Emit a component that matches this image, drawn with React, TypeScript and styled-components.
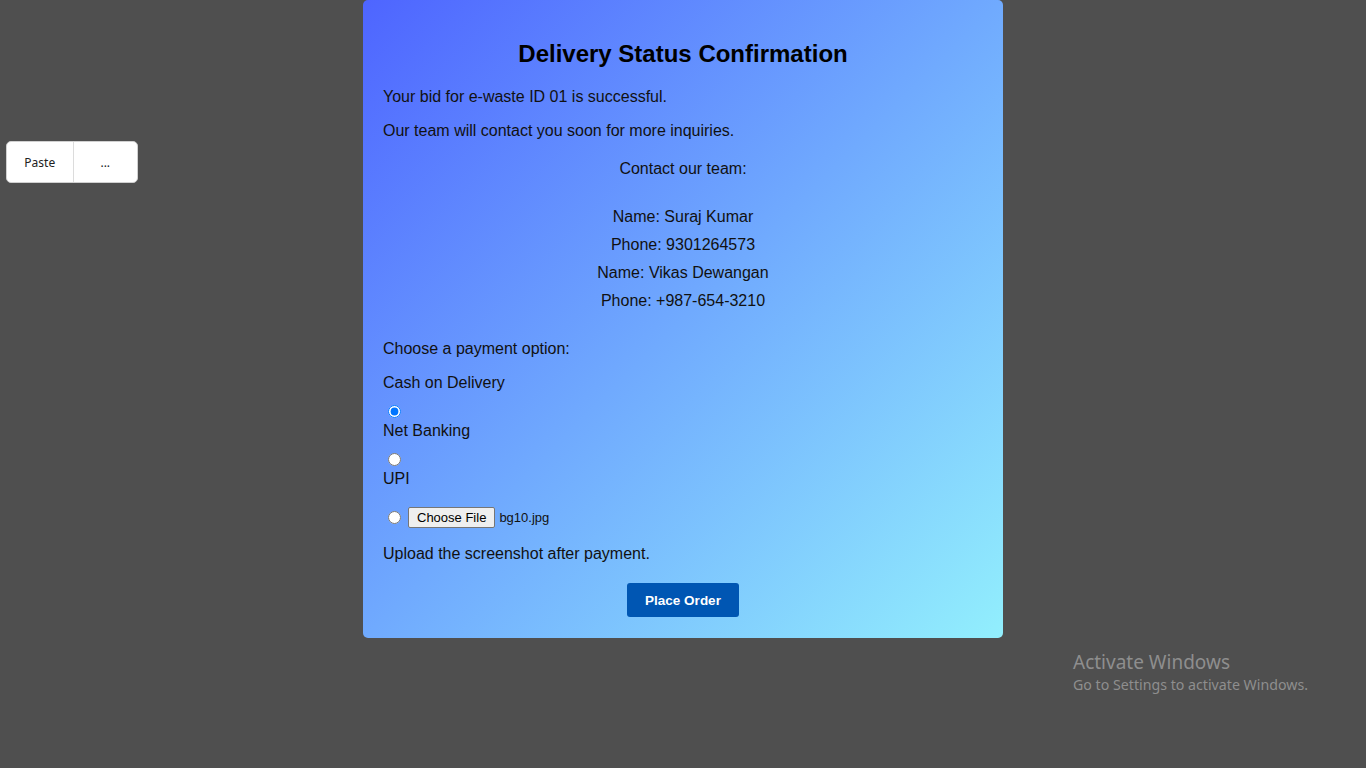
import React from 'react';
import styled, { createGlobalStyle } from 'styled-components';

const GlobalStyle = createGlobalStyle`
  html, body {
    margin: 0;
    padding: 0;
    background: #4f4f4f;
    height: 100%;
  }
  body {
    font-family: "Liberation Sans", Arial, sans-serif;
    overflow: hidden;
  }
`;

const Page = styled.div`
  width: 1366px;
  height: 768px;
  position: relative;
`;

const Card = styled.div`
  width: 640px;
  box-sizing: border-box;
  margin: 0 auto;
  padding: 40px 20px 21px;
  border-radius: 5px;
  background: linear-gradient(135deg, #4e65ff 0%, #92effd 100%);
  color: #111;
  display: flex;
  flex-direction: column;
`;

const Title = styled.h2`
  margin: 0 0 20px;
  font-size: 24px;
  line-height: 28px;
  font-weight: bold;
  text-align: center;
  color: #000;
`;

const Text = styled.p<{ $gap?: number; $center?: boolean }>`
  margin: ${(p) => p.$gap ?? 0}px 0 0;
  font-size: 16px;
  line-height: 18px;
  text-align: ${(p) => (p.$center ? 'center' : 'left')};
`;

const ContactList = styled.div`
  margin-top: 25px;
  display: flex;
  flex-direction: column;
  align-items: center;
`;

const ContactLine = styled.div`
  font-size: 16px;
  line-height: 28px;
`;

const OptionLabel = styled.label<{ $gap: number }>`
  display: block;
  margin-top: ${(p) => p.$gap}px;
  font-size: 16px;
  line-height: 18px;
`;

const Radio = styled.input.attrs({ type: 'radio' })`
  display: block;
  width: 13px;
  height: 13px;
  margin: 13px 0 0 5px;
`;

const FileRow = styled.div`
  margin-top: 19px;
  height: 21px;
  display: flex;
  align-items: center;
`;

const RowRadio = styled.input.attrs({ type: 'radio' })`
  width: 13px;
  height: 13px;
  margin: 0 7px 0 5px;
`;

const FileButton = styled.button`
  height: 21px;
  padding: 0 8px;
  font-family: "Liberation Sans", Arial, sans-serif;
  font-size: 13px;
  color: #000;
  background: #efefef;
  border: 1px solid #767676;
  border-radius: 2px;
`;

const FileName = styled.span`
  margin-left: 4px;
  font-size: 13px;
  color: #111;
`;

const SubmitButton = styled.button`
  align-self: center;
  margin-top: 20px;
  width: 112px;
  height: 34px;
  padding: 0;
  background: #0056b3;
  color: #fff;
  border: none;
  border-radius: 3px;
  font-family: "Liberation Sans", Arial, sans-serif;
  font-size: 13.5px;
  font-weight: bold;
`;

const PastePopup = styled.div`
  position: absolute;
  left: 6px;
  top: 141px;
  width: 132px;
  height: 42px;
  box-sizing: border-box;
  display: flex;
  background: #fff;
  border: 1px solid #d0d0d0;
  border-radius: 5px;
  font-family: "Noto Sans", "Open Sans", sans-serif;
  font-size: 12px;
  color: #222;
`;

const PasteCell = styled.div<{ $w: number; $divider?: boolean }>`
  width: ${(p) => p.$w}px;
  display: flex;
  align-items: center;
  justify-content: center;
  border-right: ${(p) => (p.$divider ? '1px solid #dcdcdc' : 'none')};
`;

const Watermark = styled.div`
  position: absolute;
  left: 1073px;
  top: 650px;
  font-family: "Noto Sans", "Open Sans", sans-serif;
  color: #8e8e8e;
`;

const WatermarkTitle = styled.div`
  font-size: 19px;
  line-height: 24px;
`;

const WatermarkSub = styled.div`
  font-size: 14.2px;
  line-height: 21px;
`;

const contacts = [
  'Name: Suraj Kumar',
  'Phone: 9301264573',
  'Name: Vikas Dewangan',
  'Phone: +987-654-3210',
];

export default function App() {
  return (
    <Page>
      <GlobalStyle />
      <Card>
        <Title>Delivery Status Confirmation</Title>
        <Text>Your bid for e-waste ID 01 is successful.</Text>
        <Text $gap={16}>Our team will contact you soon for more inquiries.</Text>
        <Text $gap={20} $center>Contact our team:</Text>
        <ContactList>
          {contacts.map((c) => (
            <ContactLine key={c}>{c}</ContactLine>
          ))}
        </ContactList>
        <Text $gap={25}>Choose a payment option:</Text>
        <OptionLabel $gap={16}>Cash on Delivery</OptionLabel>
        <Radio name="payment" defaultChecked />
        <OptionLabel $gap={4}>Net Banking</OptionLabel>
        <Radio name="payment" />
        <OptionLabel $gap={4}>UPI</OptionLabel>
        <FileRow>
          <RowRadio name="payment" />
          <FileButton type="button">Choose File</FileButton>
          <FileName>bg10.jpg</FileName>
        </FileRow>
        <Text $gap={17}>Upload the screenshot after payment.</Text>
        <SubmitButton type="button">Place Order</SubmitButton>
      </Card>

      <PastePopup>
        <PasteCell $w={66} $divider>Paste</PasteCell>
        <PasteCell $w={64}>...</PasteCell>
      </PastePopup>

      <Watermark>
        <WatermarkTitle>Activate Windows</WatermarkTitle>
        <WatermarkSub>Go to Settings to activate Windows.</WatermarkSub>
      </Watermark>
    </Page>
  );
}
